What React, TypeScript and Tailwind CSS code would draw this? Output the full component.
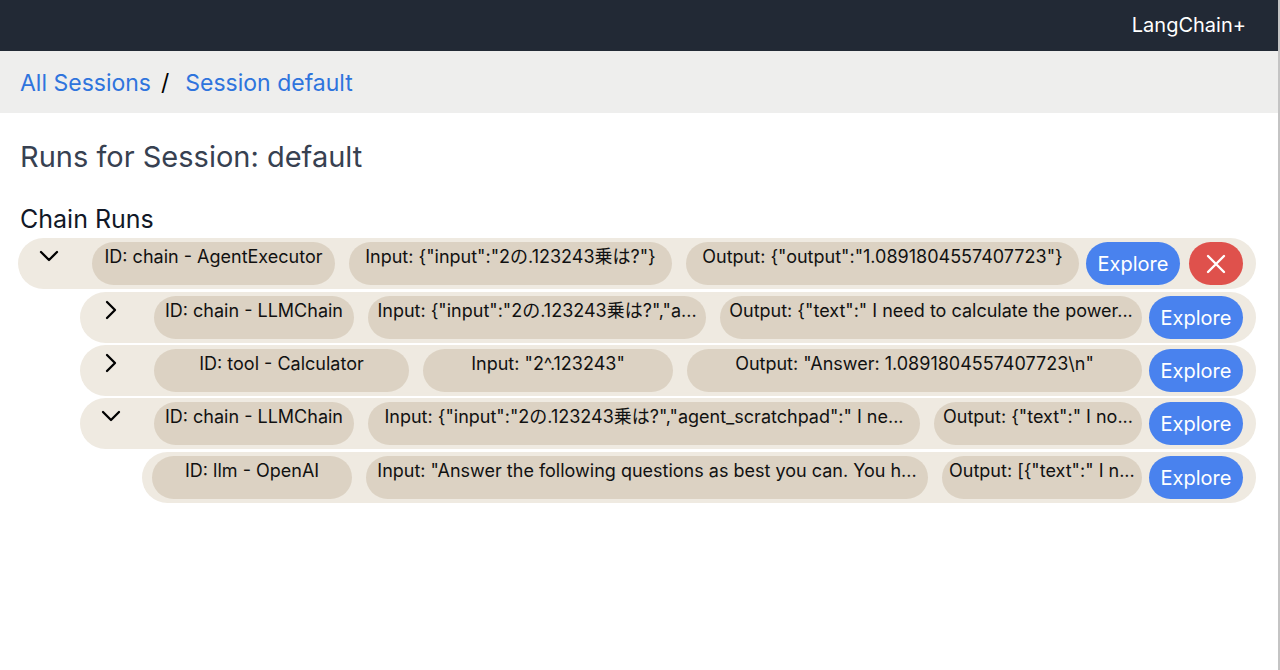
import React from "react";
import { clsx } from "clsx";

type Run = {
  id: string;
  input: string;
  output: string;
  columns: string;
  open?: boolean;
  root?: boolean;
  children?: Run[];
};

const runs: Run[] = [
  {
    id: "chain - AgentExecutor",
    input: '{"input":"2の.123243乗は?"}',
    output: '{"output":"1.0891804557407723"}',
    columns: "grid-cols-[minmax(0,243fr)_minmax(0,323fr)_minmax(0,393fr)]",
    open: true,
    root: true,
    children: [
      {
        id: "chain - LLMChain",
        input: '{"input":"2の.123243乗は?","a...',
        output: '{"text":" I need to calculate the power...',
        columns: "grid-cols-[minmax(0,200fr)_minmax(0,338fr)_minmax(0,422fr)]",
        children: [],
      },
      {
        id: "tool - Calculator",
        input: '"2^.123243"',
        output: '"Answer: 1.0891804557407723\\n"',
        columns: "grid-cols-[minmax(0,255fr)_minmax(0,250fr)_minmax(0,455fr)]",
        children: [],
      },
      {
        id: "chain - LLMChain",
        input: '{"input":"2の.123243乗は?","agent_scratchpad":" I ne...',
        output: '{"text":" I no...',
        columns: "grid-cols-[minmax(0,200fr)_minmax(0,552fr)_minmax(0,208fr)]",
        open: true,
        children: [
          {
            id: "llm - OpenAI",
            input: '"Answer the following questions as best you can. You h...',
            output: '[{"text":" I n...',
            columns: "grid-cols-[minmax(0,200fr)_minmax(0,561fr)_minmax(0,200fr)]",
          },
        ],
      },
    ],
  },
];

const Chevron = ({ open }: { open?: boolean }) => (
  <svg
    viewBox="0 0 24 24"
    className={clsx("h-6 w-6", !open && "-rotate-90")}
    fill="none"
    stroke="currentColor"
    strokeWidth="2.3"
    strokeLinecap="round"
    strokeLinejoin="round"
    aria-hidden="true"
  >
    <path d="M4 8l8 8 8-8" />
  </svg>
);

const Chip = ({ label, value }: { label: string; value: string }) => (
  <div className="h-[43px] overflow-hidden rounded-full bg-[#dcd2c3] text-center text-lg leading-[30px] whitespace-nowrap text-[#111]">
    {label}: {value}
  </div>
);

const RunRow = ({ run }: { run: Run }) => (
  <div>
    <div
      className={clsx(
        "flex items-center rounded-full bg-[#efeae1] py-1 pr-[13px]",
        !run.children && "pl-[10px]"
      )}
    >
      {run.children && (
        <button
          aria-label={run.open ? "Collapse run" : "Expand run"}
          className="mr-[31px] ml-[19px] flex h-[43px] w-6 shrink-0 items-start justify-center pt-0.5"
        >
          <Chevron open={run.open} />
        </button>
      )}
      <div className={clsx("grid min-w-0 flex-1 gap-[14px]", run.columns)}>
        <Chip label="ID" value={run.id} />
        <Chip label="Input" value={run.input} />
        <Chip label="Output" value={run.output} />
      </div>
      <button className="ml-[7px] h-[43px] w-[94px] shrink-0 rounded-full bg-[#4982ee] text-xl text-white">
        Explore
      </button>
      {run.root && (
        <button
          aria-label="Delete run"
          className="ml-[9px] flex h-[43px] w-[54px] shrink-0 items-center justify-center rounded-full bg-[#df514c] text-white"
        >
          <svg viewBox="0 0 24 24" className="h-6 w-6" fill="none" stroke="currentColor" strokeWidth="2.4" strokeLinecap="round" aria-hidden="true">
            <path d="M4 4l16 16M20 4L4 20" />
          </svg>
        </button>
      )}
    </div>
    {run.open && run.children && (
      <div className="mt-[3px] ml-[62px] flex flex-col gap-0.5">
        {run.children.map((child, i) => (
          <RunRow key={i} run={child} />
        ))}
      </div>
    )}
  </div>
);

const App = () => {
  return (
    <div className="min-h-screen border-r-2 border-[#c4c4c4] bg-white font-['Inter','Noto_Sans_CJK_JP',sans-serif]">
      <header className="flex h-[51px] items-center justify-end bg-[#222935] pr-8 pb-0.5 text-xl text-white">
        LangChain+
      </header>
      <nav aria-label="Breadcrumb" className="flex h-[62px] items-center bg-[#eeeeed] pt-0.5 pl-5 text-[23px] text-[#2f74dd]">
        <a href="#sessions">All Sessions</a>
        <span className="mr-4 ml-2.5 text-black">/</span>
        <a href="#default">Session default</a>
      </nav>
      <main className="pr-[22px] pl-[18px]">
        <h1 className="mt-6 ml-0.5 text-[29px] leading-10 text-[#374151]">Runs for Session: default</h1>
        <h2 className="mt-6 ml-0.5 text-[25px] leading-9 text-[#111827]">Chain Runs</h2>
        <div className="mt-px">
          {runs.map((run) => (
            <RunRow key={run.id} run={run} />
          ))}
        </div>
      </main>
    </div>
  );
};

export default App;
